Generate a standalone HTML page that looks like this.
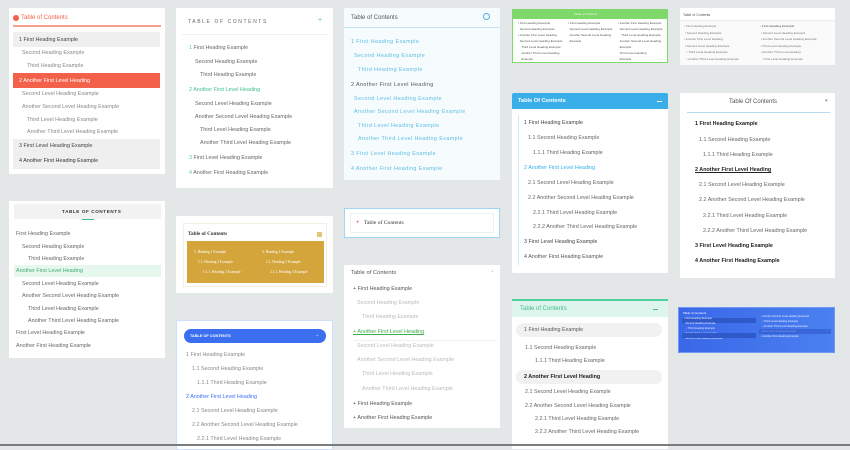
<!DOCTYPE html>
<html><head><meta charset="utf-8">
<style>
*{margin:0;padding:0;box-sizing:border-box}
body{width:850px;height:446px;background:#e4e7e8;position:relative;overflow:hidden;font-family:"Liberation Sans",sans-serif}
.c{position:absolute;background:#fff}
.t{position:absolute;white-space:nowrap;font-size:5.4px;line-height:8px;color:#666}
.b{position:absolute}
</style></head><body>

<!-- Card A -->
<div class="c" style="left:9px;top:8px;width:156px;height:166px"></div>
<div class="b" style="left:13px;top:15px;width:6px;height:6px;border-radius:50%;background:#f4614a"></div>
<div class="t" style="left:21px;top:14px;color:#f4614a;font-size:6px">Table of Contents</div>
<div class="b" style="left:13px;top:25px;width:148px;height:2px;background:#f9a190"></div>
<div class="b" style="left:13px;top:32px;width:147px;height:15px;background:#efefef"></div>
<div class="t" style="left:19px;top:36px;color:#444">1 First Heading Example</div>
<div class="t" style="left:22px;top:49px;color:#888">Second Heading Example</div>
<div class="t" style="left:27px;top:62px;color:#888">Third Heading Example</div>
<div class="b" style="left:13px;top:73px;width:147px;height:15px;background:#f4614a"></div>
<div class="t" style="left:19px;top:77px;color:#fff">2 Another First Level Heading</div>
<div class="t" style="left:22px;top:90px;color:#888">Second Level Heading Example</div>
<div class="t" style="left:22px;top:103px;color:#888">Another Second Level Heading Example</div>
<div class="t" style="left:27px;top:116px;color:#888">Third Level Heading Example</div>
<div class="t" style="left:27px;top:128px;color:#888">Another Third Level Heading Example</div>
<div class="b" style="left:13px;top:139px;width:147px;height:30px;background:#efefef"></div>
<div class="t" style="left:19px;top:142px;color:#444">3 First Level Heading Example</div>
<div class="t" style="left:19px;top:157px;color:#333">4 Another First Heading Example</div>

<!-- Card B -->
<div class="c" style="left:176px;top:8px;width:157px;height:180px"></div>
<div class="t" style="left:188px;top:18px;color:#666;letter-spacing:1.6px;font-size:5px">TABLE OF CONTENTS</div>
<div class="t" style="left:318px;top:17px;color:#5cc9a0;font-size:7px">+</div>
<div class="b" style="left:182px;top:34px;width:146px;height:1px;background:#f0f0f0"></div>
<div class="t" style="left:189px;top:44px"><span style="color:#5cc9a0">1</span> First Heading Example</div>
<div class="t" style="left:195px;top:58px">Second Heading Example</div>
<div class="t" style="left:200px;top:71px">Third Heading Example</div>
<div class="t" style="left:189px;top:86px;color:#3fbf8a">2 Another First Level Heading</div>
<div class="t" style="left:195px;top:100px">Second Level Heading Example</div>
<div class="t" style="left:195px;top:113px">Another Second Level Heading Example</div>
<div class="t" style="left:200px;top:126px">Third Level Heading Example</div>
<div class="t" style="left:200px;top:139px">Another Third Level Heading Example</div>
<div class="t" style="left:189px;top:154px"><span style="color:#5cc9a0">3</span> First Level Heading Example</div>
<div class="t" style="left:189px;top:169px"><span style="color:#5cc9a0">4</span> Another First Heading Example</div>

<!-- Card C -->
<div class="c" style="left:344px;top:8px;width:156px;height:172px;background:#f6fbfd"></div>
<div class="t" style="left:351px;top:14px;color:#555;font-size:6px">Table of Contents</div>
<div class="b" style="left:483px;top:13px;width:7px;height:7px;border-radius:50%;border:1.5px solid #4fb3de"></div>
<div class="b" style="left:344px;top:27px;width:156px;height:1px;background:#bfe3f2"></div>
<div class="t" style="left:351px;top:38px;color:#5dbde3;letter-spacing:.4px">1 First Heading Example</div>
<div class="t" style="left:354px;top:52px;color:#5dbde3;letter-spacing:.4px">Second Heading Example</div>
<div class="t" style="left:358px;top:66px;color:#5dbde3;letter-spacing:.4px">Third Heading Example</div>
<div class="t" style="left:351px;top:81px;color:#555;letter-spacing:.4px">2 Another First Level Heading</div>
<div class="t" style="left:354px;top:95px;color:#5dbde3;letter-spacing:.4px">Second Level Heading Example</div>
<div class="t" style="left:354px;top:108px;color:#5dbde3;letter-spacing:.4px">Another Second Level Heading Example</div>
<div class="t" style="left:358px;top:122px;color:#5dbde3;letter-spacing:.4px">Third Level Heading Example</div>
<div class="t" style="left:358px;top:135px;color:#5dbde3;letter-spacing:.4px">Another Third Level Heading Example</div>
<div class="t" style="left:351px;top:150px;color:#5dbde3;letter-spacing:.4px">3 First Level Heading Example</div>
<div class="t" style="left:351px;top:165px;color:#5dbde3;letter-spacing:.4px">4 Another First Heading Example</div>

<!-- Card D -->
<div class="c" style="left:512px;top:9px;width:156px;height:54px;border:1.5px solid #7fd86a"></div>
<div class="b" style="left:512px;top:9px;width:156px;height:10px;background:#7fd86a"></div>
<div class="t" style="left:574px;top:10px;color:#e8ffe0;font-size:3px">Table of Contents</div>
<div class="t" style="left:518px;top:20px;font-size:3px;line-height:6px;color:#555">• First Heading Example<br>&nbsp;&nbsp;Second Heading Example<br>• Another First Level Heading<br>&nbsp;&nbsp;Second Level Heading Example<br>&nbsp;&nbsp;&nbsp;&nbsp;Third Level Heading Example<br>&nbsp;&nbsp;&nbsp;&nbsp;Another Third Level Heading<br>&nbsp;&nbsp;&nbsp;&nbsp;Example</div>
<div class="t" style="left:568px;top:20px;font-size:3px;line-height:6px;color:#555">• First Heading Example<br>&nbsp;&nbsp;Second Level Heading Example<br>&nbsp;&nbsp;Another Second Level Heading<br>&nbsp;&nbsp;Example</div>
<div class="t" style="left:618px;top:20px;font-size:3px;line-height:6px;color:#555">• Another First Heading Example<br>&nbsp;&nbsp;Second Level Heading Example<br>&nbsp;&nbsp;&nbsp;&nbsp;Third Level Heading Example<br>&nbsp;&nbsp;Another Second Level Heading<br>&nbsp;&nbsp;Example<br>&nbsp;&nbsp;Third Level Heading<br>&nbsp;&nbsp;Example</div>

<!-- Card E -->
<div class="c" style="left:680px;top:8px;width:155px;height:57px;background:#fafafa"></div>
<div class="b" style="left:680px;top:8px;width:155px;height:13px;background:#fff;border-bottom:1px solid #eee"></div>
<div class="t" style="left:683px;top:11px;font-size:3.5px;color:#555">Table of Contents</div>
<div class="t" style="left:684px;top:23px;font-size:3px;line-height:6.5px;color:#777"><span style="color:#c7a">•</span> First Heading Example<br>&nbsp;• Second Heading Example<br><span style="color:#c7a">•</span> Another First Level Heading<br>&nbsp;• Second Level Heading Example<br>&nbsp;&nbsp;&nbsp;• Third Level Heading Example<br>&nbsp;&nbsp;&nbsp;• Another Third Level Heading Example</div>
<div class="t" style="left:760px;top:23px;font-size:3px;line-height:6.5px;color:#777"><span style="color:#c7a">•</span> <b>First Heading Example</b><br>&nbsp;• Second Level Heading Example<br>&nbsp;• Another Second Level Heading Example<br><span style="color:#c7a">•</span> Third Level Heading Example<br>&nbsp;• Another Third Level Heading<br>&nbsp;&nbsp;&nbsp;• First Level Heading Example</div>

<!-- Card F -->
<div class="c" style="left:512px;top:93px;width:156px;height:180px;border-radius:2px"></div>
<div class="b" style="left:512px;top:93px;width:156px;height:16px;background:#3aaee9;border-radius:2px 2px 0 0"></div>
<div class="t" style="left:518px;top:97px;color:#fff;font-weight:bold;font-size:5.6px">Table Of Contents</div>
<div class="b" style="left:657px;top:101px;width:5px;height:1px;background:#fff"></div>
<div class="b" style="left:518px;top:115px;width:1px;height:150px;background:#cfe9f6"></div>
<div class="t" style="left:524px;top:119px;color:#444">1 First Heading Example</div>
<div class="t" style="left:528px;top:134px">1.1 Second Heading Example</div>
<div class="t" style="left:533px;top:149px">1.1.1 Third Heading Example</div>
<div class="t" style="left:524px;top:164px;color:#3aaee9">2 Another First Level Heading</div>
<div class="t" style="left:528px;top:179px">2.1 Second Level Heading Example</div>
<div class="t" style="left:528px;top:194px">2.2 Another Second Level Heading Example</div>
<div class="t" style="left:533px;top:209px">2.2.1 Third Level Heading Example</div>
<div class="t" style="left:533px;top:223px">2.2.2 Another Third Level Heading Example</div>
<div class="t" style="left:524px;top:238px;color:#444">3 First Level Heading Example</div>
<div class="t" style="left:524px;top:253px;color:#555">4 Another First Heading Example</div>

<!-- Card G -->
<div class="c" style="left:680px;top:93px;width:155px;height:185px"></div>
<div class="t" style="left:729px;top:98px;color:#555;font-size:6px">Table Of Contents</div>
<div class="t" style="left:825px;top:97px;color:#888;font-size:5px">▾</div>
<div class="b" style="left:687px;top:112px;width:143px;height:1px;background:#b9dcf3"></div>
<div class="t" style="left:695px;top:120px;color:#222;font-weight:bold">1 First Heading Example</div>
<div class="t" style="left:699px;top:136px">1.1 Second Heading Example</div>
<div class="t" style="left:703px;top:151px">1.1.1 Third Heading Example</div>
<div class="t" style="left:695px;top:166px;color:#222;font-weight:bold;text-decoration:underline">2 Another First Level Heading</div>
<div class="t" style="left:699px;top:181px">2.1 Second Level Heading Example</div>
<div class="t" style="left:699px;top:196px">2.2 Another Second Level Heading Example</div>
<div class="t" style="left:703px;top:212px">2.2.1 Third Level Heading Example</div>
<div class="t" style="left:703px;top:227px">2.2.2 Another Third Level Heading Example</div>
<div class="t" style="left:695px;top:242px;color:#222;font-weight:bold">3 First Level Heading Example</div>
<div class="t" style="left:695px;top:257px;color:#222;font-weight:bold">4 Another First Heading Example</div>

<!-- Card H -->
<div class="c" style="left:9px;top:201px;width:156px;height:157px"></div>
<div class="b" style="left:14px;top:204px;width:147px;height:15px;background:#f2f2f2"></div>
<div class="t" style="left:62px;top:208px;color:#333;font-weight:bold;font-size:4.6px;letter-spacing:.6px">TABLE OF CONTENTS</div>
<div class="b" style="left:82px;top:219px;width:12px;height:1px;background:#3fbf8a"></div>
<div class="t" style="left:16px;top:230px">First Heading Example</div>
<div class="t" style="left:22px;top:243px">Second Heading Example</div>
<div class="t" style="left:28px;top:255px">Third Heading Example</div>
<div class="b" style="left:14px;top:265px;width:147px;height:12px;background:#e6f8ee"></div>
<div class="t" style="left:16px;top:267px;color:#3fae6e">Another First Level Heading</div>
<div class="t" style="left:22px;top:280px">Second Level Heading Example</div>
<div class="t" style="left:22px;top:292px">Another Second Level Heading Example</div>
<div class="t" style="left:28px;top:305px">Third Level Heading Example</div>
<div class="t" style="left:28px;top:317px">Another Third Level Heading Example</div>
<div class="t" style="left:16px;top:329px">First Level Heading Example</div>
<div class="t" style="left:16px;top:342px">Another First Heading Example</div>

<!-- Card I -->
<div class="c" style="left:176px;top:216px;width:157px;height:77px"></div>
<div class="b" style="left:183px;top:223px;width:144px;height:64px;border:1px solid #f5efe2"></div>
<div class="t" style="left:188px;top:230px;color:#333;font-weight:bold;font-family:'Liberation Serif',serif;font-size:5.2px">Table of Contents</div>
<div class="b" style="left:317px;top:232px;width:5px;height:5px;background:#e2c77a"></div>
<div class="b" style="left:187px;top:241px;width:137px;height:42px;background:#d4a53a"></div>
<div class="t" style="left:194px;top:248px;color:#fff;font-size:3.6px;font-family:'Liberation Serif',serif">1. Heading 1 Example</div>
<div class="t" style="left:198px;top:258px;color:#fff;font-size:3.6px;font-family:'Liberation Serif',serif">1.1. Heading 2 Example</div>
<div class="t" style="left:203px;top:268px;color:#fff;font-size:3.6px;font-family:'Liberation Serif',serif">1.1.1. Heading 3 Example</div>
<div class="t" style="left:262px;top:248px;color:#fff;font-size:3.6px;font-family:'Liberation Serif',serif">2. Heading 1 Example</div>
<div class="t" style="left:266px;top:258px;color:#fff;font-size:3.6px;font-family:'Liberation Serif',serif">2.1. Heading 2 Example</div>
<div class="t" style="left:270px;top:268px;color:#fff;font-size:3.6px;font-family:'Liberation Serif',serif">2.1.1. Heading 3 Example</div>

<!-- Card J -->
<div class="c" style="left:176px;top:320px;width:157px;height:130px;border:1px solid #cfe0fb"></div>
<div class="b" style="left:184px;top:329px;width:142px;height:14px;background:#3b6ff0;border-radius:7px"></div>
<div class="t" style="left:190px;top:332px;color:#fff;font-weight:bold;font-size:3.8px">TABLE OF CONTENTS</div>
<div class="t" style="left:316px;top:332px;color:#fff;font-size:4px">+</div>
<div class="t" style="left:186px;top:351px;color:#888">1 First Heading Example</div>
<div class="t" style="left:192px;top:365px;color:#888">1.1 Second Heading Example</div>
<div class="t" style="left:197px;top:379px;color:#888">1.1.1 Third Heading Example</div>
<div class="t" style="left:186px;top:393px;color:#3b6ff0">2 Another First Level Heading</div>
<div class="t" style="left:192px;top:407px;color:#888">2.1 Second Level Heading Example</div>
<div class="t" style="left:192px;top:421px;color:#888">2.2 Another Second Level Heading Example</div>
<div class="t" style="left:197px;top:435px;color:#888">2.2.1 Third Level Heading Example</div>

<!-- Card K -->
<div class="c" style="left:344px;top:208px;width:156px;height:30px;border:1.5px solid #9fd6f5"></div>
<div class="b" style="left:350px;top:213px;width:144px;height:20px;border:1px solid #f0f0f0"></div>
<div class="t" style="left:356px;top:219px;color:#e0507a;font-size:6px">+</div>
<div class="t" style="left:364px;top:219px;color:#333;font-family:'Liberation Serif',serif;font-size:5.6px">Table of Contents</div>

<!-- Card L -->
<div class="c" style="left:344px;top:265px;width:156px;height:163px"></div>
<div class="t" style="left:351px;top:269px;color:#555;font-size:5.8px">Table of Contents</div>
<div class="t" style="left:491px;top:268px;color:#ccc;font-size:5px">+</div>
<div class="t" style="left:353px;top:285px;color:#555">+ First Heading Example</div>
<div class="t" style="left:357px;top:299px;color:#bbb">Second Heading Example</div>
<div class="t" style="left:362px;top:313px;color:#bbb">Third Heading Example</div>
<div class="t" style="left:353px;top:328px;color:#3fae4e;text-decoration:underline">+ Another First Level Heading</div>
<div class="b" style="left:353px;top:340px;width:144px;height:1px;background:#f0f0f0"></div>
<div class="t" style="left:357px;top:342px;color:#bbb">Second Level Heading Example</div>
<div class="t" style="left:357px;top:356px;color:#bbb">Another Second Level Heading Example</div>
<div class="t" style="left:362px;top:370px;color:#bbb">Third Level Heading Example</div>
<div class="t" style="left:362px;top:385px;color:#bbb">Another Third Level Heading Example</div>
<div class="t" style="left:353px;top:400px;color:#555">+ First Heading Example</div>
<div class="t" style="left:353px;top:414px;color:#555">+ Another First Heading Example</div>

<!-- Card M -->
<div class="c" style="left:512px;top:299px;width:156px;height:150px"></div>
<div class="b" style="left:512px;top:299px;width:156px;height:2px;background:#4fcf9e"></div>
<div class="b" style="left:512px;top:301px;width:156px;height:16px;background:#ddf5ec"></div>
<div class="t" style="left:520px;top:305px;color:#3fbf8a;font-size:6px">Table of Contents</div>
<div class="b" style="left:653px;top:309px;width:5px;height:1px;background:#3fbf8a"></div>
<div class="b" style="left:516px;top:323px;width:146px;height:14px;background:#f1f1f1;border-radius:7px"></div>
<div class="t" style="left:524px;top:326px;color:#555">1 First Heading Example</div>
<div class="t" style="left:525px;top:344px">1.1 Second Heading Example</div>
<div class="t" style="left:535px;top:357px">1.1.1 Third Heading Example</div>
<div class="b" style="left:516px;top:370px;width:146px;height:14px;background:#f1f1f1;border-radius:7px"></div>
<div class="t" style="left:524px;top:373px;color:#222;font-weight:bold">2 Another First Level Heading</div>
<div class="t" style="left:525px;top:388px">2.1 Second Level Heading Example</div>
<div class="t" style="left:525px;top:402px">2.2 Another Second Level Heading Example</div>
<div class="t" style="left:535px;top:415px">2.2.1 Third Level Heading Example</div>
<div class="t" style="left:535px;top:428px">2.2.2 Another Third Level Heading Example</div>

<!-- Card N -->
<div class="c" style="left:678px;top:307px;width:157px;height:46px;background:linear-gradient(90deg,#3a67e8,#4a80f0);border:1px solid #6a9af5"></div>
<div class="t" style="left:683px;top:309px;color:#fff;font-size:3px">Table of Contents</div>
<div class="b" style="left:682px;top:318px;width:74px;height:5px;background:#2f58c9"></div>
<div class="t" style="left:684px;top:316px;color:#e8efff;font-size:2.6px;line-height:5px">• First Heading Example<br>&nbsp;&nbsp;Second Heading Example<br>&nbsp;&nbsp;&nbsp;• Third Heading Example<br>• Another First Level Heading<br>&nbsp;&nbsp;Second Level Heading Example</div>
<div class="b" style="left:682px;top:333px;width:74px;height:5px;background:#2f58c9"></div>
<div class="t" style="left:761px;top:314px;color:#e8efff;font-size:2.6px;line-height:5px">• Another Second Level Heading Example<br>&nbsp;&nbsp;• Third Level Heading Example<br>&nbsp;&nbsp;• Another Third Level Heading Example<br>• First Level Heading Example<br>• Another First Heading Example</div>
<div class="b" style="left:759px;top:329px;width:72px;height:5px;background:#2f58c9;opacity:.6"></div>

<div class="b" style="left:0;top:444px;width:850px;height:2px;background:#7a7c7d"></div>
</body></html>
